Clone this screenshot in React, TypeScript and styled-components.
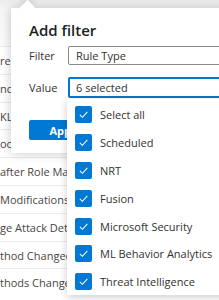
import React from "react";
import styled, { createGlobalStyle } from "styled-components";

const GlobalStyle = createGlobalStyle`
  html, body {
    margin: 0;
    padding: 0;
    background: #ffffff;
  }
  body {
    font-family: "Open Sans", "Noto Sans", sans-serif;
    color: #323130;
  }
`;

const Page = styled.div`
  position: relative;
  width: 219px;
  height: 300px;
  overflow: hidden;
  background: #ffffff;
`;

const TopBand = styled.div`
  height: 46px;
  background: linear-gradient(#ececec, #f6f6f6 20%, #fbfbfb);
`;

const RuleList = styled.ul`
  list-style: none;
  margin: 0;
  padding: 0;
`;

const RuleRow = styled.li`
  height: 27.8px;
  line-height: 27px;
  border-top: 1px solid #edebe9;
  box-sizing: border-box;
  font-size: 11px;
  color: #484644;
  white-space: nowrap;
  overflow: hidden;
`;

const Dialog = styled.div`
  position: absolute;
  left: 11px;
  top: 8px;
  width: 260px;
  height: 145px;
  box-sizing: border-box;
  padding: 11px 0 0 18px;
  background: #ffffff;
  box-shadow: 0 0 10px rgba(0, 0, 0, 0.22);

  &::before {
    content: "";
    position: absolute;
    left: 11px;
    top: -6px;
    width: 11px;
    height: 11px;
    background: #ffffff;
    transform: rotate(45deg);
    box-shadow: -3px -3px 6px rgba(0, 0, 0, 0.1);
  }
`;

const Title = styled.h2`
  margin: 0 0 5px;
  font-size: 15px;
  line-height: 22px;
  font-weight: 600;
  color: #201f1e;
`;

const Field = styled.div`
  display: grid;
  grid-template-columns: 39px 1fr;
  align-items: center;
  margin-bottom: 12px;
`;

const Label = styled.span`
  font-size: 11px;
  color: #323130;
`;

const Input = styled.div<{ $focused?: boolean }>`
  height: ${(p) => (p.$focused ? "21px" : "19px")};
  box-sizing: border-box;
  border: ${(p) => (p.$focused ? "2px solid #0078d4" : "1px solid #8a8886")};
  border-radius: 2px;
  padding-left: ${(p) => (p.$focused ? "6px" : "7px")};
  display: flex;
  align-items: center;
  font-size: 11px;
  color: #323130;
`;

const ApplyButton = styled.button`
  margin-top: 10px;
  width: 72px;
  height: 20px;
  border: none;
  border-radius: 2px;
  background: #0078d4;
  color: #ffffff;
  font-family: inherit;
  font-size: 11px;
  font-weight: 700;
  padding: 0;
`;

const Dropdown = styled.ul`
  position: absolute;
  left: 67px;
  top: 99px;
  width: 180px;
  height: 196px;
  box-sizing: border-box;
  margin: 0;
  padding: 2px 0 0;
  list-style: none;
  background: #ffffff;
  box-shadow: 0 2px 8px rgba(0, 0, 0, 0.2);
`;

const Option = styled.li`
  height: 27.8px;
  display: flex;
  align-items: center;
  gap: 8px;
  padding-left: 8px;
  font-size: 11px;
  color: #323130;
  white-space: nowrap;
`;

const Box = styled.span`
  width: 17px;
  height: 17px;
  border-radius: 2px;
  background: #0078d4;
  display: flex;
  align-items: center;
  justify-content: center;
  flex: none;
`;

const Check = () => (
  <svg width="11" height="11" viewBox="0 0 12 12">
    <path d="M2 6.4 L4.8 9.1 L10.2 3.2" fill="none" stroke="#ffffff" strokeWidth="1.1" />
  </svg>
);

const rules = [
  "re",
  "nc",
  "KL",
  "oo",
  "after Role Management",
  "Modifications",
  "ge Attack Detection",
  "thod Changed",
  "thods Changed",
];

const options = [
  "Select all",
  "Scheduled",
  "NRT",
  "Fusion",
  "Microsoft Security",
  "ML Behavior Analytics",
  "Threat Intelligence",
];

export default function App() {
  return (
    <Page>
      <GlobalStyle />
      <TopBand />
      <RuleList>
        {rules.map((r) => (
          <RuleRow key={r}>{r}</RuleRow>
        ))}
      </RuleList>
      <Dialog>
        <Title>Add filter</Title>
        <Field>
          <Label>Filter</Label>
          <Input>Rule Type</Input>
        </Field>
        <Field>
          <Label>Value</Label>
          <Input $focused>6 selected</Input>
        </Field>
        <ApplyButton>Apply</ApplyButton>
      </Dialog>
      <Dropdown>
        {options.map((o) => (
          <Option key={o}>
            <Box>
              <Check />
            </Box>
            {o}
          </Option>
        ))}
      </Dropdown>
    </Page>
  );
}
